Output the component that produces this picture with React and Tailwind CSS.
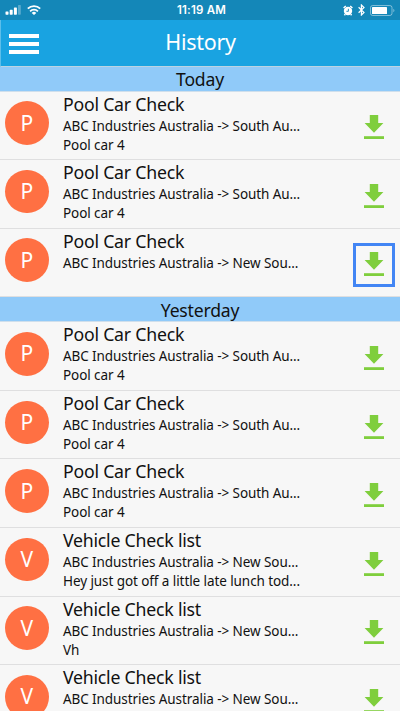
const SECTIONS = [
  {
    label: 'Today',
    items: [
      { title: 'Pool Car Check', route: 'ABC Industries Australia -> South Au...', note: 'Pool car 4' },
      { title: 'Pool Car Check', route: 'ABC Industries Australia -> South Au...', note: 'Pool car 4' },
      { title: 'Pool Car Check', route: 'ABC Industries Australia -> New Sou...', note: '', selected: true },
    ],
  },
  {
    label: 'Yesterday',
    items: [
      { title: 'Pool Car Check', route: 'ABC Industries Australia -> South Au...', note: 'Pool car 4' },
      { title: 'Pool Car Check', route: 'ABC Industries Australia -> South Au...', note: 'Pool car 4' },
      { title: 'Pool Car Check', route: 'ABC Industries Australia -> South Au...', note: 'Pool car 4' },
      { title: 'Vehicle Check list', route: 'ABC Industries Australia -> New Sou...', note: 'Hey just got off a little late lunch tod...' },
      { title: 'Vehicle Check list', route: 'ABC Industries Australia -> New Sou...', note: 'Vh' },
      { title: 'Vehicle Check list', route: 'ABC Industries Australia -> New Sou...', note: '' },
    ],
  },
]

function StatusBar() {
  return (
    <div className="grid h-5 grid-cols-3 items-center bg-[#1487b8] pl-[5px] pr-[5px] text-white">
      <div className="flex items-center gap-[6px]">
        <svg className="h-[10px] w-4" viewBox="0 0 16 10" fill="currentColor">
          <rect x="0.5" y="6.5" width="3" height="3.2" rx="0.6" />
          <rect x="4.7" y="4.8" width="3" height="4.9" rx="0.6" />
          <rect x="8.9" y="2.5" width="3" height="7.2" rx="0.6" />
          <rect x="13" y="0" width="2.8" height="9.7" rx="0.6" opacity="0.3" />
        </svg>
        <svg className="h-[10px] w-[14px]" viewBox="0 0 14 10" fill="none" stroke="currentColor" strokeWidth="1.8">
          <path d="M0.8 3.7a8.8 8.8 0 0 1 12.4 0" />
          <path d="M3.1 6.3a5.5 5.5 0 0 1 7.8 0" />
          <path d="M7 10 4.7 7.9a3.2 3.2 0 0 1 4.6 0z" fill="currentColor" stroke="none" />
        </svg>
      </div>
      <p className="pl-[3px] text-center font-['Inter',sans-serif] text-[11.5px] font-semibold leading-5 tracking-[0.2px]">11:19 AM</p>
      <div className="flex items-center justify-end">
        <svg className="mr-[5px] h-[11px] w-[10px]" viewBox="0 0 10 11">
          <circle cx="5" cy="6" r="4.2" fill="currentColor" />
          <path d="M0.6 3 2.8 1M9.4 3 7.2 1M2.3 9.2 1.4 10.3M7.7 9.2l0.9 1.1" stroke="currentColor" strokeWidth="1.5" />
          <path d="M5.4 3.8v2.5H3.4" fill="none" stroke="#1487b8" strokeWidth="0.9" />
        </svg>
        <svg className="mr-[5px] h-[12px] w-[7px]" viewBox="0 0 7 12" fill="none" stroke="currentColor" strokeWidth="1.2">
          <path d="M0.6 3.2 6 8.5 3.4 11V1L6 3.5 0.6 8.8" />
        </svg>
        <svg className="h-[11px] w-[25px]" viewBox="0 0 25 11">
          <rect x="0.5" y="0.5" width="21.5" height="10" rx="2.2" fill="none" stroke="currentColor" opacity="0.45" />
          <rect x="2" y="2" width="15" height="7" rx="0.6" fill="currentColor" />
          <path d="M23.3 3.7c1.5 0.6 1.5 3 0 3.6z" fill="currentColor" opacity="0.45" />
        </svg>
      </div>
    </div>
  )
}

function Header() {
  return (
    <header className="grid h-[46.5px] grid-cols-[60px_1fr_60px] items-start border-b border-l border-b-[#bcd3e2] border-l-[#5cbeea] bg-[#19a3e1] text-white">
      <button className="ml-[8px] mt-[14px] flex w-[30px] flex-col gap-1" aria-label="Menu">
        <span className="h-1 bg-white" />
        <span className="h-1 bg-white" />
        <span className="h-1 bg-white" />
      </button>
      <h1 className="text-center text-[21.5px] leading-[44px] tracking-[-0.3px]">History</h1>
    </header>
  )
}

function DownloadIcon() {
  return (
    <svg className="h-6 w-5" viewBox="0 0 20 24" fill="#7fce3d">
      <path d="M5.8 0h8.4v8h5.2L10 17.8 0.6 8h5.2z" />
      <rect x="0" y="21.2" width="20" height="2.8" />
    </svg>
  )
}

function HistoryRow({ item }) {
  return (
    <li className="flex h-[68.6px] border-b border-[#dfdfe0] pl-[5px] pr-[5px]">
      <div className="mt-[9.8px] flex size-[43.6px] shrink-0 items-center justify-center rounded-full bg-[#ff7043] pb-px text-[21px] leading-7 text-white">
        {item.title[0]}
      </div>
      <div className="ml-[14.4px] min-w-0 flex-1 whitespace-nowrap text-[#111]">
        <p className="text-[17.7px] leading-[24px] tracking-[-0.22px]">{item.title}</p>
        <p className="text-[13.5px] leading-5 tracking-[-0.08px]">{item.route}</p>
        <p className="text-[13.5px] leading-[19px] tracking-[-0.08px]">{item.note}</p>
      </div>
      <button
        className={`mt-[14.2px] flex h-11 w-[42px] items-center justify-center border-3 pb-px pr-px ${item.selected ? 'border-[#4285f4]' : 'border-transparent'}`}
        aria-label="Download"
      >
        <DownloadIcon />
      </button>
    </li>
  )
}

export default function App() {
  return (
    <div className="h-[711px] w-[400px] overflow-hidden bg-[#f7f7f7] font-['Noto_Sans',sans-serif]">
      <StatusBar />
      <Header />
      {SECTIONS.map((section) => (
        <section key={section.label}>
          <h2 className="h-[25px] border-b border-b-[#cfdfec] bg-[#90caf9] pt-[0.3px] text-center text-[17.6px] leading-[24px] tracking-[-0.2px] text-[#111]">
            {section.label}
          </h2>
          <ul>
            {section.items.map((item, i) => (
              <HistoryRow key={i} item={item} />
            ))}
          </ul>
        </section>
      ))}
    </div>
  )
}
